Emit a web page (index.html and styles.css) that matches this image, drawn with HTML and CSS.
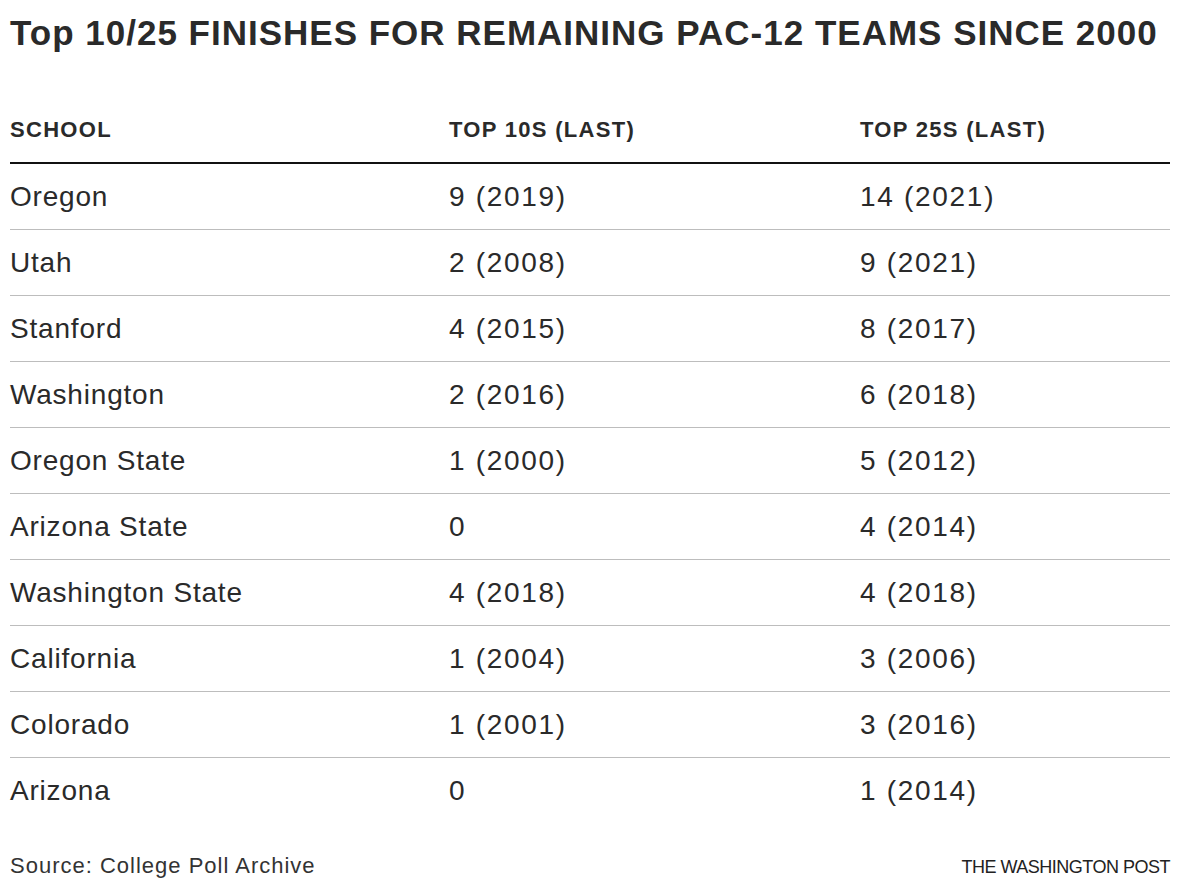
FILE: index.html
```html
<!DOCTYPE html>
<html>
<head>
<meta charset="utf-8">
<link rel="stylesheet" href="styles.css">
</head>
<body>
<div class="chart">
  <h1 class="title">Top 10/25 FINISHES FOR REMAINING PAC-12 TEAMS SINCE 2000</h1>
  <table class="tbl">
    <thead>
      <tr><th class="c1">SCHOOL</th><th class="c2">TOP 10S (LAST)</th><th class="c3">TOP 25S (LAST)</th></tr>
    </thead>
    <tbody>
      <tr><td>Oregon</td><td>9 (2019)</td><td>14 (2021)</td></tr>
      <tr><td>Utah</td><td>2 (2008)</td><td>9 (2021)</td></tr>
      <tr><td>Stanford</td><td>4 (2015)</td><td>8 (2017)</td></tr>
      <tr><td>Washington</td><td>2 (2016)</td><td>6 (2018)</td></tr>
      <tr><td>Oregon State</td><td>1 (2000)</td><td>5 (2012)</td></tr>
      <tr><td>Arizona State</td><td>0</td><td>4 (2014)</td></tr>
      <tr><td>Washington State</td><td>4 (2018)</td><td>4 (2018)</td></tr>
      <tr><td>California</td><td>1 (2004)</td><td>3 (2006)</td></tr>
      <tr><td>Colorado</td><td>1 (2001)</td><td>3 (2016)</td></tr>
      <tr><td>Arizona</td><td>0</td><td>1 (2014)</td></tr>
    </tbody>
  </table>
  <div class="footer">
    <span class="source">Source: College Poll Archive</span>
    <span class="credit">THE WASHINGTON POST</span>
  </div>
</div>
</body>
</html>
```
FILE: styles.css
```css
html, body { margin: 0; padding: 0; background: #fff; }
body { font-family: "Liberation Sans", Arial, sans-serif; color: #222; }
.chart { padding: 0 10px; width: 1160px; }
.title {
  margin: 0;
  padding-top: 13px;
  font-size: 35px;
  line-height: 40px;
  font-weight: bold;
  color: #2a2a2a;
  letter-spacing: 1px;
  white-space: nowrap;
}
.tbl { width: 100%; border-collapse: collapse; margin-top: 65px; }
.tbl th {
  text-align: left;
  font-size: 22px;
  font-weight: bold;
  letter-spacing: 1.3px;
  padding: 0 0 20px 0;
  height: 24px;
  line-height: 24px;
  border-bottom: 2px solid #111;
  color: #2a2a2a;
}
.tbl th.c1 { width: 439px; }
.tbl th.c2 { width: 411px; }
.tbl td {
  font-size: 28px;
  height: 65px;
  padding: 0;
  line-height: 30px;
  border-bottom: 1px solid #bdbdbd;
  color: #2a2a2a;
  letter-spacing: 1.7px;
}
.tbl td:first-child { letter-spacing: 0.8px; }
.tbl tbody tr:last-child td { border-bottom: none; }
.footer {
  display: flex;
  justify-content: space-between;
  align-items: baseline;
  margin-top: 30px;
}
.source { font-size: 22px; color: #333; letter-spacing: 1px; }
.credit { font-size: 18px; color: #222; letter-spacing: -0.5px; }
```
